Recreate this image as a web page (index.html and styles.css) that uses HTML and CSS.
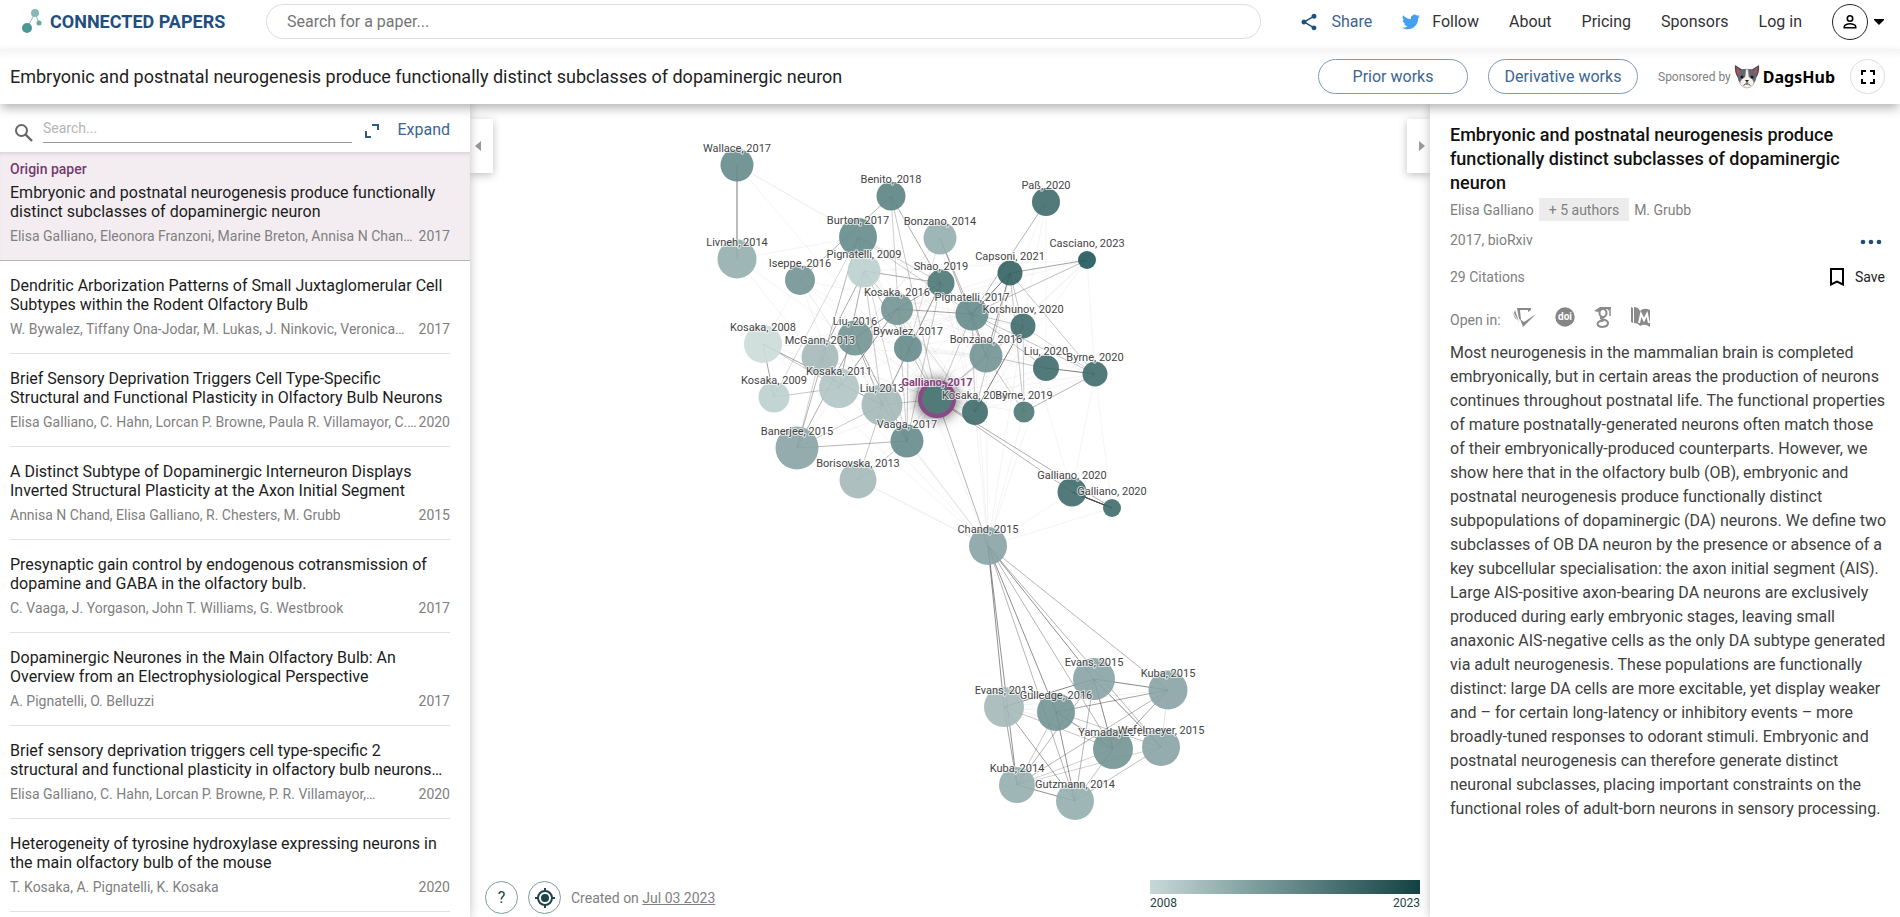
FILE: index.html
```html
<!doctype html>
<html lang="en">
    <head>
        <meta charset="utf-8">
        <title>Connected Papers</title>
        <link rel="stylesheet" href="styles.css">
    </head>
    <body>
        <header class="navbar">
            <a class="logo" href="#">
                <svg width="20" height="26" viewBox="0 0 20 26">
                    <path d="M5 19L13 4L17 14" stroke="#8fbcbb" fill="none"/>
                    <circle cx="5" cy="19" r="5" fill="#4a9796"/>
                    <circle cx="13" cy="4" r="4" fill="#85b8b7"/>
                    <circle cx="17" cy="14" r="2.5" fill="#65a8a7"/>
                </svg>
                <span>CONNECTED PAPERS</span>
            </a>
            <input class="paper-search" type="text" aria-label="Search for a paper" placeholder="Search for a paper...">
            <nav>
                <a class="share" href="#">
                    <svg width="20" height="20" viewBox="0 0 24 24"><path fill="#1d4f7c" d="M18 16.1c-.8 0-1.4.3-2 .8l-7.100-4.200c.1-.2.1-.5.1-.7s0-.5-.1-.7L16 7.200c.5.5 1.200.8 2 .8 1.700 0 3-1.300 3-3s-1.300-3-3-3-3 1.300-3 3c0 .2 0 .5.1.7L8 9.800C7.500 9.300 6.800 9 6 9c-1.700 0-3 1.300-3 3s1.300 3 3 3c.8 0 1.500-.3 2-.8l7.100 4.200c-.1.2-.1.4-.1.600 0 1.600 1.300 2.900 3 2.900s2.900-1.300 2.900-2.900-1.300-2.900-2.900-2.900z"/></svg>
                    Share
                </a>
                <a class="follow" href="#">
                    <svg width="18" height="18" viewBox="0 0 24 24"><path fill="#459ff0" d="M23.950 4.570a10 10 0 0 1-2.820.77 4.960 4.960 0 0 0 2.160-2.720c-.95.560-2 .96-3.130 1.190a4.920 4.920 0 0 0-8.380 4.480C7.690 8.100 4.070 6.130 1.640 3.160a4.920 4.920 0 0 0 1.520 6.570 4.900 4.900 0 0 1-2.230-.61v.06c0 2.380 1.700 4.370 3.950 4.820a5 5 0 0 1-2.210.09 4.940 4.940 0 0 0 4.600 3.420A9.870 9.870 0 0 1 0 19.540a14 14 0 0 0 7.550 2.210c9.050 0 14-7.500 14-13.980 0-.21 0-.42-.02-.63a9.900 9.900 0 0 0 2.420-2.570z"/></svg>
                    Follow
                </a>
                <a href="#">About</a>
                <a href="#">Pricing</a>
                <a href="#">Sponsors</a>
                <a href="#">Log in</a>
                <button class="account" aria-label="Account">
                    <span class="avatar">
                        <svg width="16" height="16" viewBox="0 0 16 16" fill="none" stroke="#000" stroke-width="1.6"><circle cx="8" cy="4.500" r="2.700"/><path d="M2.300 13.700v-1.200c0-1.800 3.500-2.700 5.700-2.700s5.700.9 5.700 2.700v1.200z"/></svg>
                    </span>
                    <svg width="10" height="6" viewBox="0 0 10 6"><path d="M0 0h10v1L5 6 0 1z"/></svg>
                </button>
            </nav>
        </header>

        <div class="titlebar">
            <h1>Embryonic and postnatal neurogenesis produce functionally distinct subclasses of dopaminergic neuron</h1>
            <button class="pill">Prior works</button>
            <button class="pill">Derivative works</button>
            <a class="sponsor" href="#">
                <span class="sponsored">Sponsored by</span>
                <svg width="26" height="24" viewBox="0 0 26 24">
                    <path d="M1 0l8 5-5 8Q0 7 1 0zM25 0l-8 5 5 8q4-6 3-13z" fill="#4b4a50"/>
                    <path d="M2.500 2l4.500 4-3 5q-2-4-1.500-9zM23.500 2L19 6l3 5q2-4 1.500-9z" fill="#b8515c"/>
                    <path d="M4 9q2-4 5-5h8q3 1 5 5 1 6-2 9-3 3-7 3t-7-3Q3 15 4 9z" fill="#66676e"/>
                    <path d="M12 4h2l1 8q5 2 5 7-3 4-7 4t-7-4q0-5 5-7z" fill="#f4f0ed" stroke="#8b8380" stroke-width=".5"/>
                    <circle cx="8" cy="12" r="1.500" fill="#17171b"/>
                    <circle cx="18" cy="12" r="1.500" fill="#17171b"/>
                    <path d="M11 15h4l-2 2.500z" fill="#222"/>
                    <path d="M13 17v2M9.500 20.500q2-2 3.500-1.500 1.500-.5 3.500 1.500" stroke="#444" fill="none"/>
                </svg>
                <span class="dagshub">DagsHub</span>
            </a>
            <button class="fullscreen" aria-label="Full screen">
                <svg width="14" height="14" viewBox="0 0 14 14" fill="none" stroke="#000" stroke-width="2"><path d="M1 5V1h4M9 1h4v4M13 9v4H9M5 13H1V9"/></svg>
            </button>
        </div>

        <main>
            <aside class="papers">
                <div class="filter">
                    <svg width="18" height="18" viewBox="0 0 18 18" fill="none" stroke="#666"><circle cx="6.500" cy="6.500" r="5.500" stroke-width="2"/><path d="M10.500 10.500l6.500 6.500" stroke-width="2.400"/></svg>
                    <input type="text" aria-label="Search in list" placeholder="Search...">
                    <button class="expand">
                        <svg width="14" height="14" viewBox="0 0 14 14" fill="none" stroke="#2d5a8a" stroke-width="2"><path d="M7 1h6v5M1 7v6h5"/></svg>
                        Expand
                    </button>
                </div>
                <ul>
                    <li class="origin">
                        <div class="tag">Origin paper</div>
                        <h2>Embryonic and postnatal neurogenesis produce functionally distinct subclasses of dopaminergic neuron</h2>
                        <div class="meta"><span>Elisa Galliano, Eleonora Franzoni, Marine Breton, Annisa N Chan…</span><span>2017</span></div>
                    </li>
                    <li>
                        <h2>Dendritic Arborization Patterns of Small Juxtaglomerular Cell Subtypes within the Rodent Olfactory Bulb</h2>
                        <div class="meta"><span>W. Bywalez, Tiffany Ona-Jodar, M. Lukas, J. Ninkovic, Veronica…</span><span>2017</span></div>
                    </li>
                    <li>
                        <h2>Brief Sensory Deprivation Triggers Cell Type-Specific Structural and Functional Plasticity in Olfactory Bulb Neurons</h2>
                        <div class="meta"><span>Elisa Galliano, C. Hahn, Lorcan P. Browne, Paula R. Villamayor, C.…</span><span>2020</span></div>
                    </li>
                    <li>
                        <h2>A Distinct Subtype of Dopaminergic Interneuron Displays Inverted Structural Plasticity at the Axon Initial Segment</h2>
                        <div class="meta"><span>Annisa N Chand, Elisa Galliano, R. Chesters, M. Grubb</span><span>2015</span></div>
                    </li>
                    <li>
                        <h2>Presynaptic gain control by endogenous cotransmission of dopamine and GABA in the olfactory bulb.</h2>
                        <div class="meta"><span>C. Vaaga, J. Yorgason, John T. Williams, G. Westbrook</span><span>2017</span></div>
                    </li>
                    <li>
                        <h2>Dopaminergic Neurones in the Main Olfactory Bulb: An Overview from an Electrophysiological Perspective</h2>
                        <div class="meta"><span>A. Pignatelli, O. Belluzzi</span><span>2017</span></div>
                    </li>
                    <li>
                        <h2>Brief sensory deprivation triggers cell type-specific 2 structural and functional plasticity in olfactory bulb neurons…</h2>
                        <div class="meta"><span>Elisa Galliano, C. Hahn, Lorcan P. Browne, P. R. Villamayor,…</span><span>2020</span></div>
                    </li>
                    <li>
                        <h2>Heterogeneity of tyrosine hydroxylase expressing neurons in the main olfactory bulb of the mouse</h2>
                        <div class="meta"><span>T. Kosaka, A. Pignatelli, K. Kosaka</span><span>2020</span></div>
                    </li>
                </ul>
            </aside>

            <section class="graph">
                <svg id="graph" viewBox="470 104 960 813"></svg>
                <button class="toggle toggle-left" aria-label="Hide list"><svg width="6" height="10" viewBox="0 0 6 10"><path fill="#999" d="M6 0v10L0 5z"/></svg></button>
                <button class="toggle toggle-right" aria-label="Hide details"><svg width="6" height="10" viewBox="0 0 6 10"><path fill="#999" d="M0 0v10l6-5z"/></svg></button>
                <div class="graph-footer">
                    <button class="round" aria-label="Help">?</button>
                    <button class="round" aria-label="Center graph">
                        <svg width="20" height="20" viewBox="0 0 20 20" fill="none" stroke="#1c4445" stroke-width="2"><circle cx="10" cy="10" r="7"/><circle cx="10" cy="10" r="3" fill="#1c4445"/><path d="M10 0v3M10 17v3M0 10h3M17 10h3"/></svg>
                    </button>
                    <span class="created">Created on <a href="#">Jul 03 2023</a></span>
                    <div class="legend">
                        <div class="legend-bar"></div>
                        <span>2008</span><span>2023</span>
                    </div>
                </div>
            </section>

            <aside class="details">
                <h2>Embryonic and postnatal neurogenesis produce functionally distinct subclasses of dopaminergic neuron</h2>
                <div class="authors"><span>Elisa Galliano</span><button>+ 5 authors</button><span>M. Grubb</span></div>
                <div class="row venue">
                    <span>2017, bioRxiv</span>
                    <button class="more" aria-label="More"><svg width="22" height="6" viewBox="0 0 22 6" fill="#1f4d73"><circle cx="3" cy="3" r="2.300"/><circle cx="11" cy="3" r="2.300"/><circle cx="19" cy="3" r="2.300"/></svg></button>
                </div>
                <div class="row citations">
                    <span>29 Citations</span>
                    <button class="save"><svg width="14" height="18" viewBox="0 0 14 18" fill="none" stroke="#000" stroke-width="2"><path d="M1 1h12v15.500l-6-3-6 3z"/></svg>Save</button>
                </div>
                <div class="open-in">
                    <span>Open in:</span>
                    <a href="#" aria-label="Semantic Scholar"><svg width="24" height="20" viewBox="0 0 24 20"><path d="M5 1h14v2l-3 2V3H8l1 10-2-1zM3 3l4 12-5-9zM0 4l5 9-2-2z" fill="#8a8a8a"/><path d="M8 12l4 3L24 7 11 20z" fill="#8a8a8a"/></svg></a>
                    <a href="#" aria-label="DOI"><svg width="20" height="20" viewBox="0 0 20 20"><circle cx="10" cy="10" r="9.700" fill="#858585"/><text x="10" y="13" text-anchor="middle" class="doi">doi</text></svg></a>
                    <a href="#" aria-label="Google Scholar"><svg width="18" height="22" viewBox="0 0 18 22" fill="none" stroke="#8a8a8a"><path d="M0 5l6-4h11v2h-2v2L13 3H8L4 6z" fill="#8a8a8a" stroke="none"/><path d="M16 2v8" stroke-width="1.500"/><ellipse cx="9" cy="7" rx="3.500" ry="4" stroke-width="2"/><path d="M7 11c-2 3 7 2 7 6 0 5-10.500 5-10.500 1 0-2.500 3-3.500 6-3" stroke-width="2"/></svg></a>
                    <a href="#" aria-label="PubMed"><svg width="20" height="20" viewBox="0 0 20 20"><path d="M0 0l2 1v15l-2-1zM3 0q4 0 6 4 4-4 10-1v17q-5-4-10-1-2-3-6-3z" fill="#8a8a8a"/><path d="M8 16l2-9 3 6 3-6 2 9" fill="none" stroke="#fff" stroke-width="2"/></svg></a>
                </div>
                <p>Most neurogenesis in the mammalian brain is completed embryonically, but in certain areas the production of neurons continues throughout postnatal life. The functional properties of mature postnatally-generated neurons often match those of their embryonically-produced counterparts. However, we show here that in the olfactory bulb (OB), embryonic and postnatal neurogenesis produce functionally distinct subpopulations of dopaminergic (DA) neurons. We define two subclasses of OB DA neuron by the presence or absence of a key subcellular specialisation: the axon initial segment (AIS). Large AIS-positive axon-bearing DA neurons are exclusively produced during early embryonic stages, leaving small anaxonic AIS-negative cells as the only DA subtype generated via adult neurogenesis. These populations are functionally distinct: large DA cells are more excitable, yet display weaker and – for certain long-latency or inhibitory events – more broadly-tuned responses to odorant stimuli. Embryonic and postnatal neurogenesis can therefore generate distinct neuronal subclasses, placing important constraints on the functional roles of adult-born neurons in sensory processing.</p>
            </aside>
        </main>
        <script src="graph.js"></script>
    </body>
</html>
```

FILE: styles.css
```css
* {
    box-sizing: border-box;
    margin: 0;
    padding: 0;
}
body {
    display: flex;
    flex-direction: column;
    height: 100vh;
    overflow: hidden;
    font-family: Roboto, "Liberation Sans", sans-serif;
    font-size: 16px;
    color: #333;
    background: #fff;
}
button {
    font: inherit;
    color: inherit;
    background: none;
    border: 0;
}
input {
    font: inherit;
    outline: 0;
}
a {
    color: inherit;
    text-decoration: none;
}
svg {
    display: block;
    flex: none;
}
ul {
    list-style: none;
}

/* top bar */
.navbar {
    display: flex;
    align-items: center;
    height: 49px;
    padding: 0 16px 6px 22px;
}
.logo {
    display: flex;
    align-items: center;
    gap: 8px;
    width: 244px;
    font-size: 18px;
    font-weight: 700;
    color: #1f4f80;
}
.paper-search {
    flex: 1;
    height: 35px;
    padding: 0 20px;
    border: 1px solid #ddd;
    border-radius: 18px;
}
.paper-search::placeholder {
    color: #757575;
}
.navbar nav {
    display: flex;
    align-items: center;
    gap: 30px;
    margin-left: 38px;
}
.share, .follow {
    display: flex;
    align-items: center;
    gap: 12px;
}
.share {
    color: #3a6593;
}
.account {
    display: flex;
    align-items: center;
    gap: 6px;
}
.avatar {
    display: flex;
    align-items: center;
    justify-content: center;
    width: 36px;
    height: 36px;
    border: 1px solid #222;
    border-radius: 50%;
}

/* title bar */
.titlebar {
    position: relative;
    z-index: 3;
    display: flex;
    align-items: center;
    height: 55px;
    padding: 0 15px 0 10px;
    background: linear-gradient(#f4f4f4, #fff 10px);
    box-shadow: 0 5px 10px -1px rgba(0, 0, 0, .3);
}
.titlebar h1 {
    flex: 1;
    font-size: 18px;
    font-weight: 400;
    color: #222;
}
.pill {
    width: 150px;
    height: 35px;
    margin-right: 20px;
    border: 1px solid #7d9ab8;
    border-radius: 18px;
    color: #3a6593;
}
.sponsor {
    display: flex;
    align-items: center;
    gap: 3px;
}
.sponsored {
    font-size: 12px;
    color: #808080;
}
.dagshub {
    font-family: "Noto Sans", sans-serif;
    font-size: 16px;
    font-weight: 700;
    color: #000;
}
.fullscreen {
    display: flex;
    align-items: center;
    justify-content: center;
    width: 35px;
    height: 35px;
    margin-left: 15px;
    border: 1px solid #ddd;
    border-radius: 50%;
}

main {
    display: flex;
    flex: 1;
    min-height: 0;
}
.papers, .details {
    position: relative;
    z-index: 2;
    flex: none;
    width: 470px;
    background: #fff;
    box-shadow: 0 0 10px rgba(0, 0, 0, .25);
}

/* paper list */
.papers {
    overflow: hidden;
}
.filter {
    display: flex;
    align-items: center;
    gap: 10px;
    height: 48px;
    padding: 6px 20px 0 15px;
}
.filter svg {
    margin-top: 4px;
}
.filter input {
    flex: 1;
    height: 24px;
    padding-bottom: 6px;
    border: 0;
    border-bottom: 1px solid #999;
    font-size: 14px;
}
.filter input::placeholder {
    color: #b5b5b5;
}
.expand {
    display: flex;
    align-items: center;
    gap: 18px;
    margin-left: 3px;
    padding-bottom: 4px;
    color: #3a6593;
}
.papers li {
    margin: 0 20px 0 10px;
    padding: 15px 0;
    border-bottom: 1px solid #e2e2e2;
}
.papers .origin {
    margin: 0;
    padding: 9px 20px 15px 10px;
    background: #f3edf1;
    border-color: #bbb0b8;
    box-shadow: inset 0 4px 5px -3px rgba(0, 0, 0, .15);
}
.tag {
    margin-bottom: 6px;
    font-size: 14px;
    line-height: 16px;
    font-weight: 500;
    color: #77396f;
}
.papers h2 {
    font-size: 16px;
    line-height: 19px;
    font-weight: 400;
    color: #1c1c1c;
}
.meta {
    display: flex;
    justify-content: space-between;
    margin-top: 7px;
    font-size: 14px;
    line-height: 17px;
    white-space: nowrap;
    color: #808080;
}

/* graph */
.graph {
    position: relative;
    flex: 1;
    min-width: 0;
}
#graph {
    width: 100%;
    height: 100%;
}
#graph text {
    font-size: 11px;
    text-anchor: middle;
    fill: #444;
    stroke: #fff;
    stroke-width: 2px;
    stroke-opacity: .7;
    paint-order: stroke;
}
#graph .origin-label {
    font-weight: 700;
    fill: #84417c;
}
#graph line {
    stroke: #4d4444;
}
#graph circle {
    fill-opacity: .9;
}
#graph .origin-node {
    fill: #527a79;
    stroke: #8a4a85;
    stroke-width: 4px;
    fill-opacity: 1;
    filter: drop-shadow(0 0 7px rgba(0, 0, 0, .7));
}
.toggle {
    position: absolute;
    top: 15px;
    display: flex;
    align-items: center;
    width: 23px;
    height: 54px;
    background: #fff;
    box-shadow: 0 2px 8px rgba(0, 0, 0, .25);
}
.toggle-left {
    left: 0;
    padding-left: 5px;
}
.toggle-right {
    right: 0;
    justify-content: flex-end;
    padding-right: 5px;
}
.graph-footer {
    position: absolute;
    left: 15px;
    right: 10px;
    bottom: 2px;
    display: flex;
    align-items: center;
    gap: 10px;
}
.round {
    display: flex;
    align-items: center;
    justify-content: center;
    width: 33px;
    height: 33px;
    border: 1px solid #7f9c9c;
    border-radius: 50%;
    color: #1c4445;
}
.created {
    flex: 1;
    font-size: 14px;
    color: #808080;
}
.created a {
    text-decoration: underline;
}
.legend {
    display: flex;
    flex-wrap: wrap;
    justify-content: space-between;
    width: 270px;
    margin-bottom: 4px;
    font-size: 12px;
    line-height: 16px;
    color: #1c4445;
}
.legend-bar {
    width: 100%;
    height: 14px;
    margin-bottom: 1px;
    background: linear-gradient(to right, #c8d8d7, #7c9c9c 40%, #134243);
}

/* paper details */
.details {
    padding: 19px 12px 0 20px;
    font-size: 14px;
    color: #808080;
}
.details h2 {
    padding-right: 10px;
    font-size: 18px;
    line-height: 24px;
    font-weight: 500;
    color: #111;
}
.authors {
    display: flex;
    align-items: center;
    gap: 5px;
    height: 23px;
    margin-top: 3px;
}
.authors button {
    height: 23px;
    padding: 0 10px;
    background: #ececec;
}
.row {
    display: flex;
    justify-content: space-between;
    align-items: center;
    height: 37px;
    padding-right: 3px;
}
.more {
    padding: 4px 3px 0 0;
}
.save {
    display: flex;
    align-items: center;
    gap: 11px;
    color: #222;
}
.open-in {
    display: flex;
    align-items: center;
    gap: 19px;
    height: 46px;
    padding-bottom: 2px;
}
.open-in span {
    margin-right: -8px;
    padding-top: 6px;
}
.doi {
    font-size: 10px;
    font-weight: 700;
    fill: #fff;
}
.details p {
    font-size: 16px;
    line-height: 24px;
    color: #404040;
}
```

FILE: graph.js
```js
var colors = {
    2008: '#cbdad8', 2009: '#bdd0ce', 2011: '#b0c4c4', 2013: '#a4b9b8',
    2014: '#94aead', 2015: '#88a3a4', 2016: '#739494', 2017: '#668b8b',
    2018: '#5b8382', 2019: '#4d7777', 2020: '#3f6b6b', 2021: '#336262',
    2023: '#205859'
}

// id: [name, year, x, y, radius]
var papers = {
    wallace: ['Wallace', 2017, 737, 165, 16.5],
    livneh: ['Livneh', 2014, 737, 259, 19.5],
    benito: ['Benito', 2018, 891, 196, 14.5],
    burton: ['Burton', 2017, 858, 237, 19],
    pig09: ['Pignatelli', 2009, 864, 271, 16.5],
    iseppe: ['Iseppe', 2016, 800, 280, 15],
    bon14: ['Bonzano', 2014, 940, 238, 16.5],
    shao: ['Shao', 2019, 941, 283, 13.5],
    pass: ['Paß', 2020, 1046, 202, 14],
    cas: ['Casciano', 2023, 1087, 260, 9],
    cap: ['Capsoni', 2021, 1010, 273, 12.5],
    kos16: ['Kosaka', 2016, 897, 309, 16],
    pig17: ['Pignatelli', 2017, 972, 314, 16.5],
    kor: ['Korshunov', 2020, 1023, 326, 12.5],
    kos08: ['Kosaka', 2008, 763, 344, 19],
    liu16: ['Liu', 2016, 855, 338, 17.5],
    mcgann: ['McGann', 2013, 820, 357, 18.5],
    byw: ['Bywalez', 2017, 908, 348, 14],
    bon16: ['Bonzano', 2016, 986, 356, 16.5],
    liu20: ['Liu', 2020, 1046, 368, 13],
    byr20: ['Byrne', 2020, 1095, 374, 12.5],
    kos11: ['Kosaka', 2011, 839, 388, 20],
    kos09: ['Kosaka', 2009, 774, 397, 15.5],
    liu13: ['Liu', 2013, 882, 405, 20.5],
    origin: ['Galliano', 2017, 937, 399, 17],
    kos20: ['Kosaka', 2020, 975, 412, 13],
    byr19: ['Byrne', 2019, 1024, 412, 10.5],
    vaaga: ['Vaaga', 2017, 907, 441, 16.5],
    ban: ['Banerjee', 2015, 797, 448, 21.5],
    bor: ['Borisovska', 2013, 858, 480, 18.5],
    gal20: ['Galliano', 2020, 1072, 492, 14.5],
    gal20b: ['Galliano', 2020, 1112, 508, 9],
    chand: ['Chand', 2015, 988, 546, 19],
    ev15: ['Evans', 2015, 1094, 679, 21],
    kub15: ['Kuba', 2015, 1168, 690, 19.5],
    ev13: ['Evans', 2013, 1004, 707, 20],
    gul: ['Gulledge', 2016, 1056, 712, 19],
    yam: ['Yamada', 2016, 1113, 749, 20],
    wef: ['Wefelmeyer', 2015, 1161, 747, 19],
    kub14: ['Kuba', 2014, 1017, 785, 18],
    gut: ['Gutzmann', 2014, 1075, 801, 19]
}

// Each entry is a paper followed by its neighbours, grouped by opacity
var edges = [
    [.06, 'wallace origin'],
    [.1, 'wallace shao'],
    [.06, 'livneh burton kos11 origin'],
    [.06, 'iseppe liu13 vaaga origin byw kos08 kos11 pig17'],
    [.06, 'pass kor bon16 liu20'],
    [.06, 'cas kos16 pig09 bon16 byr20 kos20 origin'],
    [.06, 'origin burton benito kos08 mcgann liu20 byr20 kor pig09 ban bor byr19 cap'],
    [.06, 'chand kos08 ban kos11 liu13 byw pig17 bon16 kor kos20 byr19 liu20 bor gal20 gal20b'],
    [.06, 'pig17 burton liu16 mcgann kos08 kos11 liu13 vaaga byr19'],
    [.06, 'kos16 bon14 kor liu20 byr20 cap bon16 kos09 ban'],
    [.06, 'bon16 shao burton liu16 byw kos08 liu13 vaaga'],
    [.06, 'kos20 pig09 burton shao bon14 byw liu16 liu20 byr20 mcgann'],
    [.06, 'gal20 byr20 kor'],
    [.05, 'gal20b byr20 origin'],
    [.06, 'byw burton shao bon14 liu20 kor'],
    [.08, 'ev13 gul kub15 yam wef'],
    [.12, 'bon14 byw liu16'],
    [.25, 'benito vaaga origin'],
    [.22, 'burton shao vaaga pig17'],
    [.3, 'pig09 liu13 kos16 byw'],
    [.4, 'wallace livneh livneh'],
    [.45, 'benito shao'],
    [.4, 'benito iseppe'],
    [.45, 'pig09 kos11 shao mcgann'],
    [.5, 'kos16 pig17 kos11 shao'],
    [.2, 'kos16 byw origin liu16 kos20'],
    [.5, 'kos08 kos09 liu13'],
    [.3, 'kos11 kos09 kos08'],
    [.2, 'kos09 burton'],
    [.45, 'liu16 ban liu13 vaaga kos16'],
    [.25, 'mcgann liu13 ban kos11'],
    [.3, 'liu13 ban bor origin shao vaaga'],
    [.4, 'ban vaaga burton'],
    [.3, 'bor vaaga'],
    [.3, 'byw vaaga origin'],
    [.3, 'shao vaaga pig17 liu13'],
    [.4, 'bon14 bon16 pig17'],
    [.4, 'pass pig17'],
    [.5, 'cap pig17 pig17 cas'],
    [.3, 'cap bon16 kos20 byr20 kor byr19 bon16'],
    [.35, 'cas pig17'],
    [.3, 'pig17 kor liu20 byr20 origin kos20'],
    [.5, 'pig17 bon16'],
    [.7, 'kor kos20'],
    [.25, 'kor origin byr20 byr19'],
    [.3, 'bon16 liu20 byr19 origin'],
    [.7, 'liu20 byr20'],
    [.4, 'byr19 byr20'],
    [.4, 'origin chand gal20 gal20b'],
    [.15, 'vaaga chand origin'],
    [.9, 'gal20 gal20b gal20b gal20b'],
    [.6, 'chand ev13 kub14 gul ev15'],
    [.4, 'chand gut yam wef kub15'],
    [.65, 'ev15 ev13 kub15 yam wef'],
    [.4, 'ev15 gut kub14'],
    [.5, 'kub15 gul yam'],
    [.4, 'kub15 kub14'],
    [.15, 'kub15 wef'],
    [.6, 'gul yam gut'],
    [.3, 'gul wef kub14 ev15'],
    [.5, 'ev13 gut kub14'],
    [.25, 'ev13 yam'],
    [.25, 'kub14 yam wef'],
    [.6, 'kub14 gut'],
    [.35, 'gut yam wef']
]

var graph = document.getElementById('graph')

function add(tag, attributes, text) {
    var el = document.createElementNS('http://www.w3.org/2000/svg', tag)
    for (var key in attributes) el.setAttribute(key, attributes[key])
    if (text) el.textContent = text
    graph.appendChild(el)
}

edges.forEach(function(edge) {
    var ids = edge[1].split(' ')
    var a = papers[ids[0]]
    ids.slice(1).forEach(function(id) {
        var b = papers[id]
        add('line', {x1: a[2], y1: a[3], x2: b[2], y2: b[3], 'stroke-opacity': edge[0]})
    })
})

for (var id in papers) {
    var p = papers[id]
    add('circle', {cx: p[2], cy: p[3], r: p[4], fill: colors[p[1]], 'class': id + '-node'})
}

// Labels go last so that no node covers them
for (var id in papers) {
    var p = papers[id]
    add('text', {x: p[2], y: p[3] - 13, 'class': id + '-label'}, p[0] + ', ' + p[1])
}
```
